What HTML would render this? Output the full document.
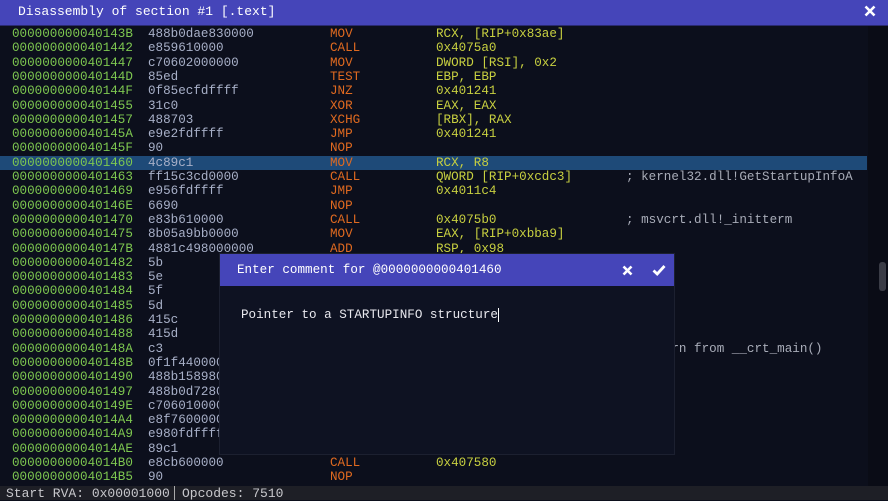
<!DOCTYPE html>
<html><head><style>
body{margin:0;width:888px;height:500px;overflow:hidden;background:#0c0f1c;font-family:"Liberation Mono","DejaVu Sans Mono",monospace;font-size:12.6px;position:relative}
.title{position:absolute;left:0;top:0;width:888px;height:25px;background:#4545b9;color:#fff;border-bottom:1px solid #2a2a70}
.title span{position:absolute;left:18px;top:4px;font-size:13px}
.x{position:absolute}
.r{position:absolute;left:0;width:867px;height:14.3px;line-height:14.3px;white-space:pre}
.r span{position:absolute}
.a{left:12px;color:#7ec850}.b{left:148px;color:#a8b0c8}.m{left:330px;color:#e06a20}.o{left:436px;color:#c8d040}.c{left:626px;color:#a8acb8}
.hl{background:#1e4a78}
.sb{position:absolute;left:868px;top:26px;width:20px;height:461px;background:#0a0c16}
.th{position:absolute;left:879px;top:262px;width:7px;height:29px;background:#3a3c46;border-radius:3px}
.status{position:absolute;left:0;top:486px;width:888px;height:14px;background:#1e1f26;color:#c8c8cc;font-size:13px;line-height:15px}
.dlg{position:absolute;left:219px;top:253px;width:456px;height:202px;background:#0e1222;border:1px solid #1c2030;box-sizing:border-box}
.dh{position:absolute;left:0;top:0;width:100%;height:32px;background:#4545b9;color:#fff}
</style></head><body>
<div class="title"><span>Disassembly of section #1 [.text]</span><svg class="x" style="left:864px;top:5px" width="12" height="12" viewBox="0 0 12 12"><path d="M1.5 1.5L10.5 10.5M10.5 1.5L1.5 10.5" stroke="#fff" stroke-width="2.6"/></svg></div>
<div style="position:absolute;top:27px;left:0">
<div class="r" style="top:0"><span class="a">000000000040143B</span><span class="b">488b0dae830000</span><span class="m">MOV</span><span class="o">RCX, [RIP+0x83ae]</span></div>
<div class="r" style="top:14.3px"><span class="a">0000000000401442</span><span class="b">e859610000</span><span class="m">CALL</span><span class="o">0x4075a0</span></div>
<div class="r" style="top:28.6px"><span class="a">0000000000401447</span><span class="b">c70602000000</span><span class="m">MOV</span><span class="o">DWORD [RSI], 0x2</span></div>
<div class="r" style="top:42.9px"><span class="a">000000000040144D</span><span class="b">85ed</span><span class="m">TEST</span><span class="o">EBP, EBP</span></div>
<div class="r" style="top:57.2px"><span class="a">000000000040144F</span><span class="b">0f85ecfdffff</span><span class="m">JNZ</span><span class="o">0x401241</span></div>
<div class="r" style="top:71.5px"><span class="a">0000000000401455</span><span class="b">31c0</span><span class="m">XOR</span><span class="o">EAX, EAX</span></div>
<div class="r" style="top:85.8px"><span class="a">0000000000401457</span><span class="b">488703</span><span class="m">XCHG</span><span class="o">[RBX], RAX</span></div>
<div class="r" style="top:100.1px"><span class="a">000000000040145A</span><span class="b">e9e2fdffff</span><span class="m">JMP</span><span class="o">0x401241</span></div>
<div class="r" style="top:114.4px"><span class="a">000000000040145F</span><span class="b">90</span><span class="m">NOP</span></div>
<div class="r hl" style="top:128.7px"><span class="a">0000000000401460</span><span class="b">4c89c1</span><span class="m">MOV</span><span class="o">RCX, R8</span></div>
<div class="r" style="top:143px"><span class="a">0000000000401463</span><span class="b">ff15c3cd0000</span><span class="m">CALL</span><span class="o">QWORD [RIP+0xcdc3]</span><span class="c">; kernel32.dll!GetStartupInfoA</span></div>
<div class="r" style="top:157.3px"><span class="a">0000000000401469</span><span class="b">e956fdffff</span><span class="m">JMP</span><span class="o">0x4011c4</span></div>
<div class="r" style="top:171.6px"><span class="a">000000000040146E</span><span class="b">6690</span><span class="m">NOP</span></div>
<div class="r" style="top:185.9px"><span class="a">0000000000401470</span><span class="b">e83b610000</span><span class="m">CALL</span><span class="o">0x4075b0</span><span class="c">; msvcrt.dll!_initterm</span></div>
<div class="r" style="top:200.2px"><span class="a">0000000000401475</span><span class="b">8b05a9bb0000</span><span class="m">MOV</span><span class="o">EAX, [RIP+0xbba9]</span></div>
<div class="r" style="top:214.5px"><span class="a">000000000040147B</span><span class="b">4881c498000000</span><span class="m">ADD</span><span class="o">RSP, 0x98</span></div>
<div class="r" style="top:228.8px"><span class="a">0000000000401482</span><span class="b">5b</span></div>
<div class="r" style="top:243.1px"><span class="a">0000000000401483</span><span class="b">5e</span></div>
<div class="r" style="top:257.4px"><span class="a">0000000000401484</span><span class="b">5f</span></div>
<div class="r" style="top:271.7px"><span class="a">0000000000401485</span><span class="b">5d</span></div>
<div class="r" style="top:286px"><span class="a">0000000000401486</span><span class="b">415c</span></div>
<div class="r" style="top:300.3px"><span class="a">0000000000401488</span><span class="b">415d</span></div>
<div class="r" style="top:314.6px"><span class="a">000000000040148A</span><span class="b">c3</span><span class="c">; return from __crt_main()</span></div>
<div class="r" style="top:328.9px"><span class="a">000000000040148B</span><span class="b">0f1f440000</span></div>
<div class="r" style="top:343.2px"><span class="a">0000000000401490</span><span class="b">488b158980</span></div>
<div class="r" style="top:357.5px"><span class="a">0000000000401497</span><span class="b">488b0d7280</span></div>
<div class="r" style="top:371.8px"><span class="a">000000000040149E</span><span class="b">c706010000</span></div>
<div class="r" style="top:386.1px"><span class="a">00000000004014A4</span><span class="b">e8f7600000</span></div>
<div class="r" style="top:400.4px"><span class="a">00000000004014A9</span><span class="b">e980fdffff</span></div>
<div class="r" style="top:414.7px"><span class="a">00000000004014AE</span><span class="b">89c1</span></div>
<div class="r" style="top:429px"><span class="a">00000000004014B0</span><span class="b">e8cb600000</span><span class="m">CALL</span><span class="o">0x407580</span></div>
<div class="r" style="top:443.3px"><span class="a">00000000004014B5</span><span class="b">90</span><span class="m">NOP</span></div>
</div>
<div class="sb"></div><div class="th"></div>
<div class="dlg"><div class="dh"><span style="position:absolute;left:17px;top:9px;font-size:12.6px">Enter comment for @0000000000401460</span>
<svg class="x" style="left:402px;top:11px" width="11" height="11" viewBox="0 0 11 11"><path d="M1.5 1.5L9.5 9.5M9.5 1.5L1.5 9.5" stroke="#fff" stroke-width="2.6"/></svg>
<svg class="x" style="left:432px;top:10px" width="14" height="12" viewBox="0 0 14 12"><path d="M1.5 6.5L5.2 10L12.5 2" stroke="#fff" stroke-width="2.8" fill="none"/></svg></div>
<div style="position:absolute;left:21px;top:54px;color:#e8e8ee;font-size:12.6px">Pointer to a STARTUPINFO structure<span style="border-left:1px solid #fff">&#8203;</span></div></div>
<div class="status"><span style="position:absolute;left:6px;top:0">Start RVA: 0x00001000</span><span style="position:absolute;left:174px;top:0;width:1px;height:14px;background:#aaa"></span><span style="position:absolute;left:182px;top:0">Opcodes: 7510</span></div>
</body></html>
